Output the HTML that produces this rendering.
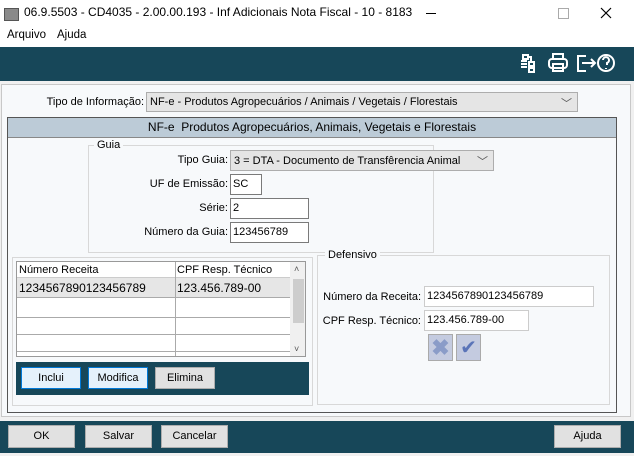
<html><head><style>
body{margin:0;width:634px;height:456px;background:#f0f0f0;font-family:"Liberation Sans",sans-serif;font-size:11px;color:#000;position:relative;overflow:hidden}
.a{position:absolute}
.in{position:absolute;background:#fff;border:1px solid #7a7a7a;box-sizing:border-box;padding:3px 2px;font-size:11px}
.cb{position:absolute;background:#e5e5e5;border:1px solid #adadad;box-sizing:border-box;padding:3px 3px;font-size:11px}
.btn{position:absolute;background:#e1e1e1;border:1px solid #adadad;box-sizing:border-box;text-align:center;line-height:20px;font-size:11px}
.lbl{position:absolute;text-align:right;font-size:11px}
.grp{position:absolute;border:1px solid #d8d8d8;box-sizing:border-box}
.gt{position:absolute;background:#f7f9fb;padding:0 3px;font-size:11px}
</style></head><body>
<div class="a" style="left:0;top:0;width:634px;height:47px;background:#fff"></div>
<div class="a" style="left:4px;top:8px;width:13px;height:11px;background:#8a8a8a;border:1px solid #555"></div>
<div class="a" style="left:24px;top:5px;font-size:12px">06.9.5503 - CD4035 - 2.00.00.193 - Inf Adicionais Nota Fiscal - 10 - 8183</div>
<div class="a" style="left:426px;top:13px;width:10px;height:1px;background:#000"></div>
<div class="a" style="left:558px;top:8px;width:9px;height:9px;border:1px solid #aaa"></div>
<svg class="a" style="left:600px;top:7px" width="12" height="12" stroke="#000" stroke-width="1.2"><path d="M1 1L11 11M11 1L1 11"/></svg>
<div class="a" style="left:7px;top:29px;font-size:11.5px">Arquivo</div>
<div class="a" style="left:57px;top:29px;font-size:11.5px">Ajuda</div>
<div class="a" style="left:0;top:47px;width:634px;height:34px;background:#174759"></div>
<svg class="a" style="left:518px;top:50px" width="116" height="26" fill="none" stroke="#fff" stroke-width="2">
<rect x="5" y="5" width="5" height="4"/><rect x="11" y="12" width="5" height="4"/><rect x="11" y="18" width="5" height="4"/><path d="M3 11h6M3 14h6M3 17h6M10 7h3v5"/>
<rect x="31" y="9" width="18" height="9" rx="3"/><rect x="35" y="4" width="10" height="5"/><rect x="35" y="14" width="10" height="7"/>
<path d="M68 6h-8v15h8M64 13h13M73 9l4 4-4 4"/>
<circle cx="88" cy="13" r="8"/><path d="M85 10a3 3 0 1 1 4 3v2M88 18v1"/></svg>
<div class="a" style="left:1px;top:84px;width:630px;height:333px;background:#f7f9fb;border:1px solid #c8c8c8;box-sizing:border-box"></div>
<div class="lbl" style="left:20px;top:96px;width:124px">Tipo de Informação:</div>
<div class="cb" style="left:146px;top:92px;width:432px;height:20px">NF-e - Produtos Agropecuários / Animais / Vegetais / Florestais<span style="position:absolute;right:5px;top:2px;color:#555">﹀</span></div>
<div class="a" style="left:7px;top:117px;width:610px;height:296px;border:1px solid #555;box-sizing:border-box"></div>
<div class="a" style="left:8px;top:118px;width:608px;height:19px;background:#bccbd7;border-bottom:1px solid #888;text-align:center;line-height:19px;font-size:12px">NF-e&nbsp; Produtos Agropecuários, Animais, Vegetais e Florestais</div>
<div class="grp" style="left:88px;top:145px;width:346px;height:108px"></div>
<div class="gt" style="left:94px;top:139px">Guia</div>
<div class="lbl" style="left:100px;top:154px;width:128px">Tipo Guia:</div>
<div class="cb" style="left:230px;top:150px;width:264px;height:21px;padding-top:4px">3 = DTA - Documento de Transfêrencia Animal<span style="position:absolute;right:5px;top:2px;color:#555">﹀</span></div>
<div class="lbl" style="left:100px;top:178px;width:128px">UF de Emissão:</div>
<div class="in" style="left:230px;top:174px;width:32px;height:21px">SC</div>
<div class="lbl" style="left:100px;top:202px;width:128px">Série:</div>
<div class="in" style="left:230px;top:198px;width:79px;height:21px">2</div>
<div class="lbl" style="left:100px;top:226px;width:128px">Número da Guia:</div>
<div class="in" style="left:230px;top:222px;width:79px;height:21px">123456789</div>
<div class="grp" style="left:12px;top:257px;width:301px;height:149px"></div>
<div class="a" style="left:16px;top:261px;width:290px;height:96px;background:#fff;border:1px solid #999;box-sizing:border-box;overflow:hidden">
<div class="a" style="left:0;top:0;width:273px;height:15px;border-bottom:1px solid #ccc"></div>
<div class="a" style="left:2px;top:2px">Número Receita</div><div class="a" style="left:160px;top:2px">CPF Resp. Técnico</div>
<div class="a" style="left:0;top:16px;width:273px;height:19px;background:#e6e6e6;border-bottom:1px solid #aaa;font-size:12px"><span class="a" style="left:2px;top:3px">1234567890123456789</span><span class="a" style="left:160px;top:3px">123.456.789-00</span></div>
<div class="a" style="left:0;top:55px;width:273px;height:1px;background:#aaa"></div>
<div class="a" style="left:0;top:72px;width:273px;height:1px;background:#aaa"></div>
<div class="a" style="left:0;top:89px;width:273px;height:1px;background:#aaa"></div>
<div class="a" style="left:158px;top:0;width:1px;height:96px;background:#aaa"></div>
<div class="a" style="left:273px;top:0;width:16px;height:96px;background:#f0f0f0"></div>
<div class="a" style="left:276px;top:17px;width:11px;height:44px;background:#cdcdcd"></div>
<div class="a" style="left:277px;top:2px;font-size:9px;color:#555">˄</div>
<div class="a" style="left:277px;top:82px;font-size:9px;color:#555">˅</div>
</div>
<div class="a" style="left:16px;top:362px;width:293px;height:33px;background:#174759"></div>
<div class="btn" style="left:21px;top:367px;width:60px;height:22px;background:#e5f1fb;border:1px solid #0078d7">Inclui</div>
<div class="btn" style="left:88px;top:367px;width:60px;height:22px;background:#e5f1fb;border:1px solid #0078d7">Modifica</div>
<div class="btn" style="left:155px;top:367px;width:60px;height:22px">Elimina</div>
<div class="grp" style="left:317px;top:255px;width:293px;height:150px"></div>
<div class="gt" style="left:325px;top:249px">Defensivo</div>
<div class="lbl" style="left:300px;top:291px;width:121px">Número da Receita:</div>
<div class="in" style="left:424px;top:286px;width:170px;height:21px;border-color:#ccc">1234567890123456789</div>
<div class="lbl" style="left:300px;top:315px;width:121px">CPF Resp. Técnico:</div>
<div class="in" style="left:424px;top:310px;width:105px;height:21px;border-color:#ccc">123.456.789-00</div>
<div class="a" style="left:428px;top:334px;width:25px;height:27px;background:#c4cbe0;border:1px solid #aaa;box-sizing:border-box;color:#8a9cc8;font-size:22px;text-align:center;line-height:26px;font-weight:bold">✖</div>
<div class="a" style="left:456px;top:334px;width:25px;height:27px;background:#c4cbe0;border:1px solid #aaa;box-sizing:border-box;color:#5a74b8;font-size:20px;text-align:center;line-height:26px">✔</div>
<div class="a" style="left:0;top:421px;width:634px;height:32px;background:#174759"></div>
<div class="btn" style="left:8px;top:425px;width:67px;height:23px">OK</div>
<div class="btn" style="left:85px;top:425px;width:67px;height:23px">Salvar</div>
<div class="btn" style="left:161px;top:425px;width:67px;height:23px">Cancelar</div>
<div class="btn" style="left:554px;top:425px;width:67px;height:23px">Ajuda</div>
</body></html>
